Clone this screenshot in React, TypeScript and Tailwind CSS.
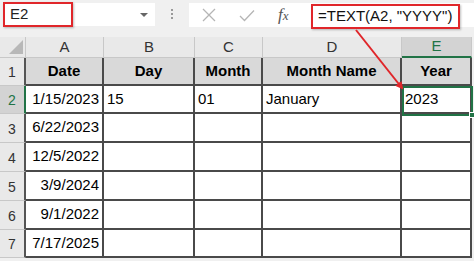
import React from 'react';

const cols = [
  { key: 'A', w: 'w-[78px]' },
  { key: 'B', w: 'w-[91px]' },
  { key: 'C', w: 'w-[68px]' },
  { key: 'D', w: 'w-[139px]' },
  { key: 'E', w: 'w-[70px]' },
];

const heights = ['h-[28px]', 'h-[28px]', 'h-[29px]', 'h-[29px]', 'h-[29px]', 'h-[29px]', 'h-[28px]'];

const rows: string[][] = [
  ['Date', 'Day', 'Month', 'Month Name', 'Year'],
  ['1/15/2023', '15', '01', 'January', '2023'],
  ['6/22/2023', '', '', '', ''],
  ['12/5/2022', '', '', '', ''],
  ['3/9/2024', '', '', '', ''],
  ['9/1/2022', '', '', '', ''],
  ['7/17/2025', '', '', '', ''],
];

const Toolbar = () => (
  <div className="flex h-[37px] items-start pt-[3px]">
    <div className="relative ml-[3px] flex h-[23px] w-[152px] items-center bg-white">
      <span className="pl-[7px] text-[15px] text-[#222]">E2</span>
      <span className="absolute right-[7px] top-[10px] h-0 w-0 border-x-[4px] border-t-[4px] border-x-transparent border-t-[#666]" />
      <div className="absolute left-0 top-[-1px] h-[25px] w-[70px] border-2 border-[#e0262a] shadow-[1px_1px_2px_rgba(0,0,0,0.25)]" />
    </div>
    <div className="flex w-[34px] flex-col items-center gap-[2px] pt-[6px]">
      <span className="h-[2px] w-[2px] bg-[#999]" />
      <span className="h-[2px] w-[2px] bg-[#999]" />
      <span className="h-[2px] w-[2px] bg-[#999]" />
    </div>
    <div className="relative flex h-[24px] flex-1 items-center bg-white">
      <svg width="14" height="14" viewBox="0 0 14 14" className="ml-[13px]">
        <path d="M1 1 L13 13 M13 1 L1 13" stroke="#b5b5b5" strokeWidth="1.3" fill="none" />
      </svg>
      <svg width="16" height="13" viewBox="0 0 16 13" className="ml-[23px]">
        <path d="M1 7 L5.5 11.5 L15 1.5" stroke="#b5b5b5" strokeWidth="1.3" fill="none" />
      </svg>
      <span className="ml-[23px] font-['Liberation_Serif',serif] text-[17px] italic text-[#555]">
        f<span className="text-[13px]">x</span>
      </span>
      <div className="absolute left-[122px] top-[1px] flex h-[25px] w-[149px] items-center border-2 border-[#e0262a] pl-[5px] text-[15px] text-[#111] shadow-[1px_1px_2px_rgba(0,0,0,0.25)]">
        =TEXT(A2, "YYYY")
      </div>
    </div>
  </div>
);

const Grid = () => (
  <div className="relative">
    <div className="flex h-[21px]">
      <div className="relative w-[26px] border-b border-r border-[#c8c8c8] bg-[#e9e9e9]">
        <svg width="14" height="14" viewBox="0 0 14 14" className="absolute bottom-[3px] right-[2px]">
          <path d="M14 0 L14 14 L0 14 Z" fill="#b8b8b8" />
        </svg>
      </div>
      {cols.map((c) => (
        <div
          key={c.key}
          className={`${c.w} flex items-center justify-center border-r text-[15px] ${
            c.key === 'E'
              ? 'border-b-2 border-r-[#c8c8c8] border-b-[#217346] bg-[#d3d3d3] text-[#217346]'
              : 'border-b border-[#c8c8c8] bg-[#e9e9e9] text-[#333]'
          }`}
        >
          {c.key}
        </div>
      ))}
    </div>
    {rows.map((r, i) => (
      <div key={i} className={`flex ${heights[i]}`}>
        <div
          className={`flex w-[26px] items-end justify-center pb-[2px] text-[14px] ${
            i === 1
              ? 'border-b border-r-2 border-b-[#c8c8c8] border-r-[#217346] bg-[#d3d3d3] text-[#217346]'
              : 'border-b border-r-2 border-b-[#c8c8c8] border-r-[#555] bg-[#e9e9e9] text-[#333]'
          }`}
        >
          {i + 1}
        </div>
        {r.map((v, j) => (
          <div
            key={j}
            className={`${cols[j].w} flex items-center border-b-2 border-r-2 border-[#4a4a4a] text-[15px] text-black ${
              i === 0
                ? 'justify-center bg-[#d9d9d9] font-bold'
                : j === 0
                ? 'justify-end bg-white pr-[3px]'
                : 'bg-white pl-[3px]'
            }`}
          >
            {v}
          </div>
        ))}
      </div>
    ))}
    <div className="absolute left-[402px] top-[49px] h-[30px] w-[71px] border-2 border-[#217346]">
      <span className="absolute bottom-[-4px] right-[-4px] h-[6px] w-[6px] border border-white bg-[#217346]" />
    </div>
  </div>
);

export default function App() {
  return (
    <div className="relative h-[261px] w-[474px] overflow-hidden bg-[#f0f0f0] font-['Liberation_Sans',Arial,sans-serif]">
      <Toolbar />
      <Grid />
      <svg className="pointer-events-none absolute left-0 top-0" width="474" height="261">
        <defs>
          <marker id="ah" markerWidth="8" markerHeight="8" refX="6" refY="4" orient="auto" markerUnits="userSpaceOnUse">
            <path d="M0 0 L8 4 L0 8 Z" fill="#e0262a" />
          </marker>
        </defs>
        <line x1="356" y1="30" x2="402" y2="88" stroke="#e0262a" strokeWidth="2" markerEnd="url(#ah)" />
      </svg>
    </div>
  );
}
